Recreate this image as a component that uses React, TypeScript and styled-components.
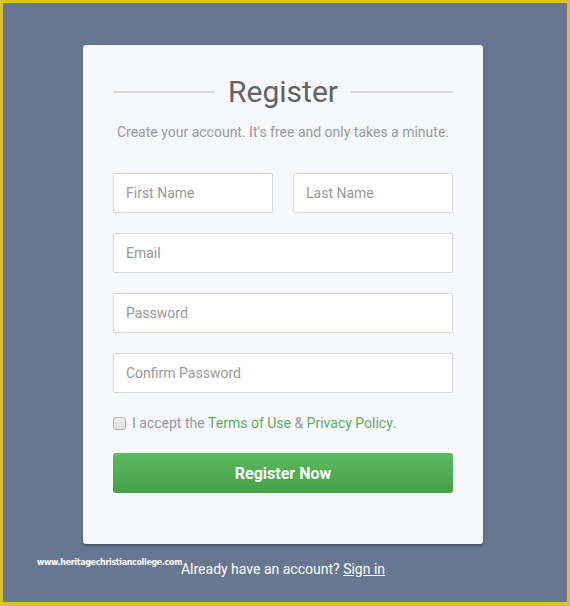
import React from "react";
import styled, { createGlobalStyle } from "styled-components";

const Global = createGlobalStyle`
  html, body { margin: 0; padding: 0; }
  body { font-family: Roboto, "Liberation Sans", sans-serif; }
  * { box-sizing: border-box; }
`;

const Frame = styled.div`
  position: relative;
  width: 570px;
  height: 606px;
  background: #677790;
  border-style: solid;
  border-color: #dcc12e;
  border-width: 3px 3px 4px 3px;
  display: flex;
  flex-direction: column;
  align-items: center;
  padding: 42px 4px 0 0;
`;

const Card = styled.div`
  width: 400px;
  background: #f7f8fc;
  border-radius: 3px;
  box-shadow: 0 2px 3px rgba(0, 0, 0, 0.3);
  padding: 27px 30px 51px;
  display: flex;
  flex-direction: column;
`;

const TitleRow = styled.div`
  display: flex;
  align-items: center;
  gap: 13px;
`;

const Rule = styled.div`
  flex: 1;
  height: 2px;
  background: #d9d9dc;
`;

const Title = styled.h2`
  margin: 0;
  font-family: Roboto, "Liberation Sans", sans-serif;
  font-weight: 400;
  font-size: 30px;
  line-height: 40px;
  color: #636363;
`;

const Subtitle = styled.p`
  margin: 10px 0 0;
  text-align: center;
  font-size: 14px;
  line-height: 20px;
  color: #999;
`;

const Fields = styled.div`
  margin-top: 31px;
  display: flex;
  flex-direction: column;
  gap: 20px;
`;

const Row = styled.div`
  display: grid;
  grid-template-columns: 1fr 1fr;
  gap: 20px;
`;

const Input = styled.input`
  width: 100%;
  height: 40px;
  border: 1px solid #d8d8d8;
  border-radius: 2px;
  background: #fff;
  padding: 0 12px;
  font-family: Roboto, "Liberation Sans", sans-serif;
  font-size: 14px;
  color: #555;
  outline: none;
  &::placeholder { color: #999; }
`;

const Accept = styled.label`
  margin-top: 20px;
  display: flex;
  align-items: center;
  font-size: 14px;
  line-height: 20px;
  color: #999;
`;

const Check = styled.input`
  appearance: none;
  width: 13px;
  height: 13px;
  margin: 0 6px 0 0;
  border: 1px solid #b4b4b4;
  border-radius: 3px;
  background: linear-gradient(to bottom, #f0f0f0, #dedede);
`;

const Link = styled.a`
  color: #5fae5f;
  text-decoration: none;
`;

const Button = styled.button`
  margin-top: 20px;
  height: 40px;
  border: none;
  border-radius: 3px;
  background: linear-gradient(to bottom, #5dba5e, #46a046);
  color: #fff;
  font-family: Roboto, "Liberation Sans", sans-serif;
  font-weight: 700;
  font-size: 16px;
  cursor: pointer;
`;

const Footer = styled.p`
  margin: 15px 0 0 0;
  font-size: 14px;
  line-height: 20px;
  color: #fff;
  text-align: center;
`;

const FooterLink = styled.a`
  color: #fff;
  text-decoration: underline;
`;

const Watermark = styled.span`
  position: absolute;
  left: 34px;
  top: 555px;
  font-family: "DejaVu Sans", sans-serif;
  font-weight: 700;
  font-size: 8px;
  letter-spacing: -0.35px;
  color: #fff;
`;

export default function App() {
  return (
    <>
      <Global />
      <Frame>
        <Card>
          <TitleRow>
            <Rule />
            <Title>Register</Title>
            <Rule />
          </TitleRow>
          <Subtitle>Create your account. It's free and only takes a minute.</Subtitle>
          <Fields>
            <Row>
              <Input placeholder="First Name" />
              <Input placeholder="Last Name" />
            </Row>
            <Input placeholder="Email" />
            <Input type="password" placeholder="Password" />
            <Input type="password" placeholder="Confirm Password" />
          </Fields>
          <Accept>
            <Check type="checkbox" />
            I accept the&nbsp;<Link href="#">Terms of Use</Link>&nbsp;&amp;&nbsp;
            <Link href="#">Privacy Policy</Link>.
          </Accept>
          <Button>Register Now</Button>
        </Card>
        <Footer>
          Already have an account? <FooterLink href="#">Sign in</FooterLink>
        </Footer>
        <Watermark>www.heritagechristiancollege.com</Watermark>
      </Frame>
    </>
  );
}
